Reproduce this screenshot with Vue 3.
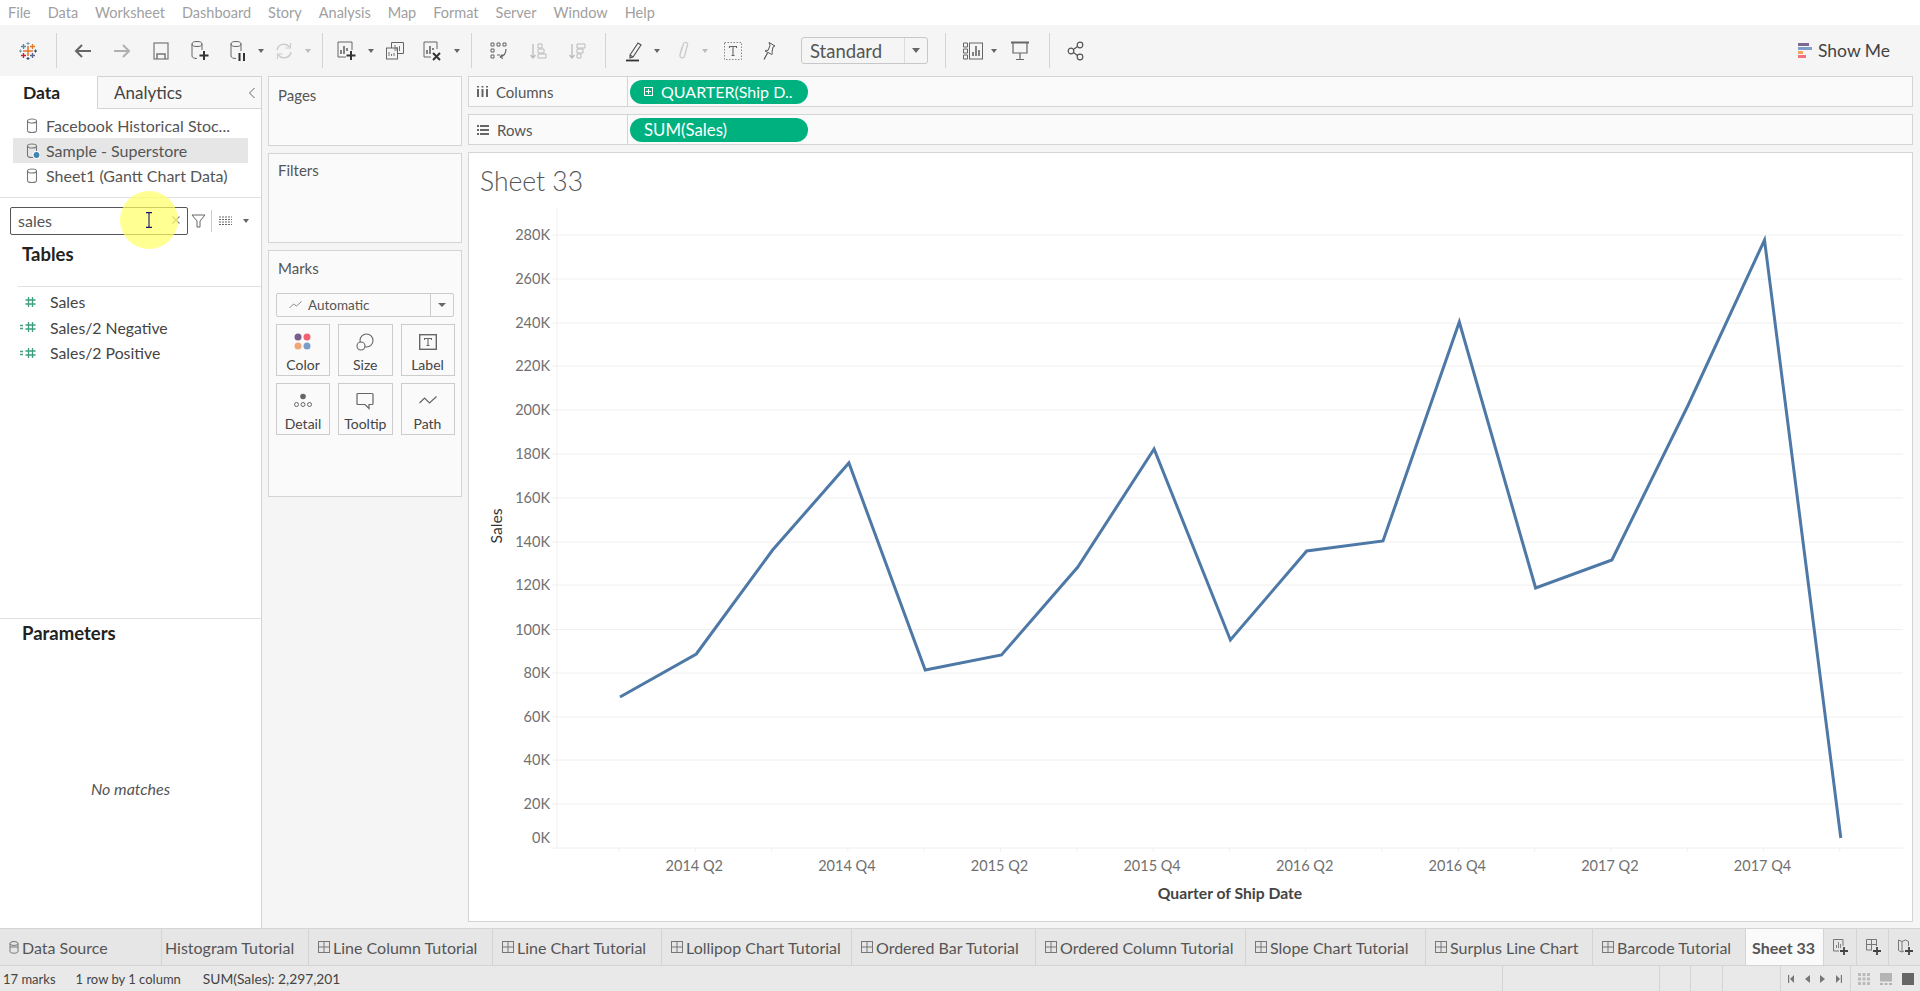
<template>
  <div class="app">
    <!-- Menu bar -->
    <nav class="menubar">
      <span v-for="m in menus" :key="m" class="menu-item">{{ m }}</span>
    </nav>

    <!-- Toolbar -->
    <div class="toolbar">
      <button class="tb logo">
        <svg width="20" height="20" viewBox="0 0 20 20" fill="none" stroke-width="1.3">
          <path d="M10 5v10M5 10h10" stroke="#e8762b" stroke-width="1.6"/>
          <path d="M5.5 3v5M3 5.500h5" stroke="#59879b"/>
          <path d="M14.500 3v5M12 5.500h5" stroke="#e8762b"/>
          <path d="M5.500 12v5M3 14.500h5" stroke="#c72035"/>
          <path d="M14.500 12v5M12 14.500h5" stroke="#5b6591"/>
          <path d="M10 1v3M8.500 2.500h3M1 10h3M2.500 8.500v3" stroke="#7099a6" stroke-width="1"/>
          <path d="M16 10h3M17.500 8.500v3M10 16v3M8.500 17.500h3" stroke="#1f447d" stroke-width="1"/>
        </svg>
      </button>
      <i class="sep first"></i>
      <div class="group g1">
        <button class="tb">
          <svg width="18" height="16" viewBox="0 0 18 16" fill="none" stroke="#666" stroke-width="2"><path d="M17 8H2M8 2 2 8l6 6"/></svg>
        </button>
        <button class="tb">
          <svg width="18" height="16" viewBox="0 0 18 16" fill="none" stroke="#b0b0b0" stroke-width="2"><path d="M1 8h15M10 2l6 6-6 6"/></svg>
        </button>
        <button class="tb">
          <svg width="16" height="18" viewBox="0 0 16 18" fill="none" stroke="#777" stroke-width="1.200"><rect x="1" y="1" width="14" height="16"/><path d="M4 17v-5h8v5" stroke-width="1.500"/></svg>
        </button>
        <button class="tb">
          <svg width="20" height="22" viewBox="0 0 20 22" fill="none" stroke="#666"><ellipse cx="7" cy="4" rx="5" ry="2.500"/><path d="M2 4v12c0 1.500 2 2.500 5 2.500M12 4v6"/><path d="M14 11v9M9.500 15.500h9" stroke="#333" stroke-width="2"/></svg>
        </button>
        <button class="tb">
          <svg width="20" height="22" viewBox="0 0 20 22" fill="none" stroke="#666"><ellipse cx="7" cy="4" rx="5" ry="2.500"/><path d="M2 4v12c0 1.500 2 2.500 5 2.500M12 4v7"/><path d="M10.500 13v8M15 13v8" stroke="#333" stroke-width="2"/></svg>
        </button>
        <i class="caret"></i>
        <button class="tb">
          <svg width="18" height="18" viewBox="0 0 18 18" fill="none" stroke="#ccc" stroke-width="1.500"><path d="M2 8a7 7 0 0 1 12.500-3M16 10a7 7 0 0 1-12.500 3"/><path d="M15.500 1v5h-5M2.500 17v-5h5" stroke-width="1.200"/></svg>
        </button>
        <i class="caret light tc"></i>
      </div>
      <i class="sep"></i>
      <div class="group g2">
        <button class="tb">
          <svg width="22" height="22" viewBox="0 0 22 22" fill="none" stroke="#666"><path d="M16 10V2H2v15h8"/><path d="M5 14v-4M8 14V6M11 11V8" stroke-width="1.600"/><path d="M15 11v9M10.500 15.500h9" stroke="#333" stroke-width="2"/></svg>
        </button>
        <i class="caret tc"></i>
        <button class="tb narrow">
          <svg width="20" height="20" viewBox="0 0 20 20" fill="none" stroke="#666"><path d="M6.500 7V1.500h12v11H13"/><rect x="1.500" y="7" width="11" height="11"/><path d="M10 10V4M12 10V6M14.500 10V5M4 15v-4M6.500 15v-2M9 15v-3" stroke-width=".9"/></svg>
        </button>
        <button class="tb narrow">
          <svg width="22" height="22" viewBox="0 0 22 22" fill="none" stroke="#666"><path d="M15 9V2H2v15h7"/><path d="M5 14v-4M8 14V6M11 10V8" stroke-width="1.600"/><path d="m11 13 7 7M18 13l-7 7" stroke="#333" stroke-width="2"/></svg>
        </button>
        <i class="caret tc"></i>
      </div>
      <i class="sep"></i>
      <div class="group g3">
        <button class="tb">
          <svg width="20" height="20" viewBox="0 0 20 20" fill="none" stroke="#666"><path d="M2 2h3v3H2zM8 2h3v3H8zM14 2h3v3h-3zM2 8h3v3H2zM2 14h3v3H2zM8 14h3"/><path d="M17 8c0 4-2 7-6 8m0 0 2.500-2.500M11 16l3 1.500" stroke-width="1.200"/></svg>
        </button>
        <button class="tb">
          <svg width="18" height="18" viewBox="0 0 18 18" fill="none" stroke="#bbb"><path d="M4 2v14M1.500 13 4 16l2.500-3" stroke-width="1.300"/><path d="M9 2h4v4H9zM9 7h6v4H9zM9 12h8v4H9z"/></svg>
        </button>
        <button class="tb">
          <svg width="18" height="18" viewBox="0 0 18 18" fill="none" stroke="#bbb"><path d="M4 2v14M1.500 13 4 16l2.500-3" stroke-width="1.300"/><path d="M9 2h8v4H9zM9 7h6v4H9zM9 12h4v4H9z"/></svg>
        </button>
      </div>
      <i class="sep"></i>
      <div class="group g4">
        <button class="tb short">
          <svg width="18" height="22" viewBox="0 0 18 22" fill="none" stroke="#555" stroke-width="1.200"><path d="m5 15 8-12 3 2-8 12-3 1zM5 15l3 2"/><path d="M1 20.500h13" stroke="#333" stroke-width="1.800"/></svg>
        </button>
        <i class="caret c-a"></i>
        <button class="tb short clip">
          <svg width="16" height="20" viewBox="0 0 16 20" fill="none" stroke="#ccc" stroke-width="1.400"><path d="m6 6-2 8c-.6 3 3.500 4 4.500 1l3-11c.6-3-3-3.500-4-1L4.500 12"/></svg>
        </button>
        <i class="caret light c-b"></i>
        <button class="tb short text-box">
          <svg width="18" height="18" viewBox="0 0 18 18" fill="none"><rect x=".5" y=".5" width="17" height="17" stroke="#888" stroke-dasharray="1.500 1.500"/><path d="M5.500 6V4.500h7V6M9 4.500v9M7.500 13.500h3" stroke="#666" stroke-width="1.100"/></svg>
        </button>
        <button class="tb short pin">
          <svg width="16" height="20" viewBox="0 0 16 20" fill="none" stroke="#555"><path d="m8 1.500 6 3.500-2 1-1 5c.5 1 .5 1.500 0 2.500L4 10c1-.8 1.500-.8 3-.5l2-5z"/><path d="M6.500 12 3 18.500" stroke-width="1.200"/></svg>
        </button>
      </div>
      <div class="standard">
        <span class="standard-text">Standard</span>
        <span class="standard-caret"><i class="caret dark"></i></span>
      </div>
      <i class="sep after-select"></i>
      <div class="group g5">
        <button class="tb short">
          <svg width="20" height="18" viewBox="0 0 20 18" fill="none" stroke="#666"><path d="M.5 1h4v4h-4zM.5 7h4v4h-4zM.5 13h4v4h-4z"/><rect x="6.500" y="1" width="13" height="16"/><path d="M10 14v-4M13 14V4M16 14V8" stroke-width="1.600"/></svg>
        </button>
        <i class="caret c-c"></i>
        <button class="tb present">
          <svg width="20" height="20" viewBox="0 0 20 20" fill="none" stroke="#666"><path d="M1 1.500h18" stroke-width="2"/><path d="M3 2v10h14V2M10 12v6M6 18.500h8" stroke-width="1.200"/></svg>
        </button>
      </div>
      <i class="sep"></i>
      <button class="tb share">
        <svg width="18" height="20" viewBox="0 0 18 20" fill="none" stroke="#555" stroke-width="1.200"><circle cx="4" cy="10" r="2.800"/><circle cx="13" cy="4" r="2.800"/><circle cx="13" cy="16" r="2.800"/><path d="m6.500 8.500 4-3M6.500 11.500l4 3"/></svg>
      </button>
      <div class="show-me">
        <svg width="14" height="15" viewBox="0 0 14 15"><rect y="0" width="11" height="3" fill="#7b6a92"/><rect y="4" width="14" height="3" fill="#7f9fcb"/><rect y="8" width="5" height="3" fill="#f2a35e"/><rect y="12" width="8" height="3" fill="#f4717d"/></svg>
        <span>Show Me</span>
      </div>
    </div>

    <!-- Main work area -->
    <div class="main">
      <aside class="data-pane">
        <div class="pane-tabs">
          <div class="pane-tab active">Data</div>
          <div class="pane-tab other">
            <span>Analytics</span>
            <svg class="collapse" width="8" height="12" viewBox="0 0 8 12" fill="none" stroke="#666"><path d="M6.500 1 1.500 6l5 5"/></svg>
          </div>
        </div>

        <ul class="sources">
          <li v-for="s in sources" :key="s.name" class="source" :class="{ current: s.current }">
            <svg width="14" height="16" viewBox="0 0 14 16" fill="none" stroke="#777" stroke-width="1.100">
              <ellipse cx="6" cy="3" rx="4.500" ry="2"/>
              <path d="M1.500 3v9.500c0 1.200 2 2 4.500 2s4.500-.8 4.500-2V3"/>
              <circle v-if="s.current" cx="10.500" cy="12" r="3.500" fill="#3f86b0" stroke="#fff"/>
            </svg>
            <span>{{ s.name }}</span>
          </li>
        </ul>

        <div class="search-row">
          <div class="search-box">
            <span>sales</span>
            <svg width="10" height="10" viewBox="0 0 10 10" fill="none" stroke="#888" stroke-width="1.100"><path d="m1.500 1.500 7 7M8.500 1.500l-7 7"/></svg>
          </div>
          <svg class="funnel" width="15" height="14" viewBox="0 0 15 14" fill="none" stroke="#666"><path d="M1 1h13L9 7v6H6V7z"/></svg>
          <i class="search-sep"></i>
          <svg class="list-view" width="13" height="10" viewBox="0 0 13 10" fill="none" stroke="#666" stroke-dasharray="2 1"><path d="M0 1h13M0 3.500h13M0 6h13M0 8.500h13"/></svg>
          <i class="caret search-caret"></i>
        </div>

        <h3 class="section-title tables">Tables</h3>
        <ul class="fields">
          <li v-for="f in fields" :key="f.name" class="field">
            <svg width="16" height="12" viewBox="0 0 16 12" fill="none" stroke="#3f9e80" stroke-width="1.300">
              <path d="M8.500 1v10M12.500 1v10M5.500 4h10M5.500 8h10"/>
              <path v-if="f.calc" d="M0 4.500h3M0 7.500h3"/>
            </svg>
            <span>{{ f.name }}</span>
          </li>
        </ul>

        <section class="params">
          <h3 class="section-title">Parameters</h3>
          <p class="no-matches">No matches</p>
        </section>

        <!-- mouse highlight of the recording -->
        <div class="mouse-ring">
          <svg width="8" height="16" viewBox="0 0 8 16" fill="none" stroke="#14146e" stroke-width="1.100"><path d="M1 .6h6M1 15.400h6M4 .6v14.800"/></svg>
        </div>
      </aside>

      <div class="cards">
        <section class="card pages">Pages</section>
        <section class="card filters">Filters</section>
        <section class="card marks">
          <div class="marks-title">Marks</div>
          <div class="marks-type">
            <svg width="13" height="8" viewBox="0 0 13 8" fill="none" stroke="#888"><path d="m.5 7 4-4 3 2 5-4.500"/></svg>
            <span>Automatic</span>
            <span class="marks-caret"><i class="caret dark"></i></span>
          </div>
          <div class="marks-grid">
            <div class="mark-btn">
              <svg width="18" height="18" viewBox="0 0 18 18">
                <circle cx="4" cy="4" r="3.500" fill="#7b5e8e"/><circle cx="13" cy="4" r="3.500" fill="#f2626e"/>
                <circle cx="4" cy="13" r="3.500" fill="#f2a678"/><circle cx="13" cy="13" r="3.500" fill="#7a9ec9"/>
              </svg>
              <span>Color</span>
            </div>
            <div class="mark-btn">
              <svg width="18" height="18" viewBox="0 0 18 18" fill="none" stroke="#666" stroke-width="1.100"><circle cx="10.500" cy="7.500" r="6.500"/><circle cx="5" cy="13" r="4" fill="#fafafa"/></svg>
              <span>Size</span>
            </div>
            <div class="mark-btn">
              <svg width="18" height="16" viewBox="0 0 18 16" fill="none" stroke="#666"><rect x=".7" y=".7" width="16.600" height="14.600" stroke-width="1.400"/><path d="M5.500 6V4.500h7V6M9 4.500v7M7.500 11.500h3" stroke-width="1.100"/></svg>
              <span>Label</span>
            </div>
            <div class="mark-btn">
              <svg width="20" height="16" viewBox="0 0 20 16" fill="none" stroke="#666"><circle cx="10" cy="3.500" r="2.800" fill="#666" stroke="none"/><circle cx="3.500" cy="11.500" r="2"/><circle cx="10" cy="11.500" r="2"/><circle cx="16.500" cy="11.500" r="2"/></svg>
              <span>Detail</span>
            </div>
            <div class="mark-btn">
              <svg width="18" height="17" viewBox="0 0 18 17" fill="none" stroke="#666" stroke-width="1.200"><path d="M2 1h14q1 0 1 1v9q0 1-1 1h-3v4l-4-4H2q-1 0-1-1V2q0-1 1-1z"/></svg>
              <span>Tooltip</span>
            </div>
            <div class="mark-btn">
              <svg width="18" height="10" viewBox="0 0 18 10" fill="none" stroke="#666" stroke-width="1.200"><path d="m.5 7 5-5 5 5 7-6.500"/></svg>
              <span>Path</span>
            </div>
          </div>
        </section>
      </div>

      <div class="viz-col">
        <div class="shelf">
          <div class="shelf-label">
            <svg width="11" height="11" viewBox="0 0 11 11" fill="#666"><rect x="0" y="3" width="2" height="8"/><rect x="4.500" y="3" width="2" height="8"/><rect x="9" y="3" width="2" height="8"/><rect x="0" y="0" width="2" height="1.500"/><rect x="4.500" y="0" width="2" height="1.500"/><rect x="9" y="0" width="2" height="1.500"/></svg>
            <span>Columns</span>
          </div>
          <div class="pill">
            <svg width="9" height="9" viewBox="0 0 9 9" fill="none" stroke="#fff"><rect x=".5" y=".5" width="8" height="8"/><path d="M4.500 2v5M2 4.500h5"/></svg>
            <span>QUARTER(Ship D..</span>
          </div>
        </div>
        <div class="shelf">
          <div class="shelf-label">
            <svg width="12" height="10" viewBox="0 0 12 10" fill="#666"><rect x="0" y="0" width="2" height="2"/><rect x="3" y="0" width="9" height="2"/><rect x="0" y="4" width="2" height="2"/><rect x="3" y="4" width="9" height="2"/><rect x="0" y="8" width="2" height="2"/><rect x="3" y="8" width="9" height="2"/></svg>
            <span>Rows</span>
          </div>
          <div class="pill sum">
            <span>SUM(Sales)</span>
          </div>
        </div>

        <section class="viz">
          <h2 class="viz-title">Sheet 33</h2>
          <svg class="chart" width="1443" height="720" viewBox="469 201 1443 720">
            <line x1="557" y1="208" x2="557" y2="848" class="grid"/>
            <g v-for="t in yTicks" :key="t.label">
              <line x1="552" :y1="t.y" x2="1903" :y2="t.y" class="grid"/>
              <text x="550" :y="t.y + 5" text-anchor="end" class="tick">{{ t.label }}</text>
            </g>
            <line x1="552" y1="848" x2="1903" y2="848" class="grid"/>
            <text x="550" y="843" text-anchor="end" class="tick">0K</text>
            <line v-for="(p, i) in points" :key="i" :x1="p[0] - 1" y1="848" :x2="p[0] - 1" y2="852" class="grid"/>
            <text v-for="t in xLabels" :key="t.label" :x="t.x" y="871" text-anchor="middle" class="tick">{{ t.label }}</text>
            <polyline :points="linePoints" fill="none" stroke="#4e79a7" stroke-width="3" stroke-linejoin="miter"/>
            <text x="1230" y="899" text-anchor="middle" class="axis-title">Quarter of Ship Date</text>
            <text x="0" y="0" text-anchor="middle" class="axis-title side" transform="translate(502 526) rotate(-90)">Sales</text>
          </svg>
        </section>
      </div>
    </div>

    <!-- Sheet tabs -->
    <div class="tabs">
      <div v-for="t in tabs" :key="t.name" class="tab" :class="{ active: t.active, plain: !t.icon }" :style="{ width: t.w + 'px' }">
        <svg v-if="t.icon === 'ds'" width="10" height="13" viewBox="0 0 10 13" fill="none" stroke="#777"><ellipse cx="5" cy="2.500" rx="4" ry="2"/><path d="M1 2.500v8c0 1 1.800 1.700 4 1.700s4-.7 4-1.700v-8M1 6h8"/></svg>
        <svg v-if="t.icon === 'grid'" width="12" height="12" viewBox="0 0 12 12" fill="none" stroke="#777"><rect x=".5" y=".5" width="11" height="11"/><path d="M6 .5v11M.5 6h11"/></svg>
        <span>{{ t.name }}</span>
      </div>
      <div class="tab add">
        <svg width="18" height="18" viewBox="0 0 18 18" fill="none" stroke="#777"><path d="M11 8V1.500H1.500V13H7"/><path d="M4.500 10V7M6.500 10V4M8.500 10V6" stroke-width=".9"/><path d="M12 9v8M8 13h8" stroke="#444" stroke-width="1.800"/></svg>
      </div>
      <div class="tab add">
        <svg width="18" height="18" viewBox="0 0 18 18" fill="none" stroke="#777"><path d="M11.500 8V1.500h-10V12H7M6.500 1.500V12M1.500 6.500h10"/><path d="M12 9v8M8 13h8" stroke="#444" stroke-width="1.800"/></svg>
      </div>
      <div class="tab add last">
        <svg width="18" height="18" viewBox="0 0 18 18" fill="none" stroke="#777"><path d="M1.500 2 5 3.500 8.500 2l3 1.500V8M1.500 2v10.500L5 14l2-1M5 3.500V14"/><path d="M12 9v8M8 13h8" stroke="#444" stroke-width="1.800"/></svg>
      </div>
    </div>

    <!-- Status bar -->
    <footer class="status">
      <span class="st-marks">17 marks</span>
      <span class="st-rows">1 row by 1 column</span>
      <span class="st-sum">SUM(Sales): 2,297,201</span>
      <i class="st-div d1"></i>
      <i class="st-div d2"></i>
      <i class="st-div d3"></i>
      <i class="st-div d4"></i>
      <i class="st-div d5"></i>
      <div class="st-nav">
        <svg width="6" height="8" viewBox="0 0 6 8" fill="#777"><rect width="1.200" height="8"/><path d="M6 0v8L2 4z"/></svg>
        <svg width="5" height="8" viewBox="0 0 5 8" fill="#777"><path d="M5 0v8L0 4z"/></svg>
        <svg width="5" height="8" viewBox="0 0 5 8" fill="#777"><path d="M0 0v8l5-4z"/></svg>
        <svg width="6" height="8" viewBox="0 0 6 8" fill="#777"><rect x="4.800" width="1.200" height="8"/><path d="M0 0v8l4-4z"/></svg>
      </div>
      <i class="st-div d6"></i>
      <div class="st-views">
        <svg width="12" height="12" viewBox="0 0 12 12" fill="#bbb"><path d="M0 0h3v3H0zM4.500 0h3v3h-3zM9 0h3v3H9zM0 4.500h3v3H0zM4.500 4.500h3v3h-3zM9 4.500h3v3H9zM0 9h3v3H0zM4.500 9h3v3h-3zM9 9h3v3H9z"/></svg>
        <svg width="12" height="12" viewBox="0 0 12 12" fill="#b4b4b4"><rect width="12" height="8.500"/><path d="M0 10h3v2H0zM4.500 10h3v2h-3zM9 10h3v2H9z"/></svg>
        <svg width="12" height="12" viewBox="0 0 12 12" fill="#666"><rect width="12" height="12"/></svg>
      </div>
    </footer>
  </div>
</template>

<script setup>
const menus = ['File', 'Data', 'Worksheet', 'Dashboard', 'Story', 'Analysis', 'Map', 'Format', 'Server', 'Window', 'Help']

const sources = [
  { name: 'Facebook Historical Stoc...' },
  { name: 'Sample - Superstore', current: true },
  { name: 'Sheet1 (Gantt Chart Data)' }
]

const fields = [
  { name: 'Sales' },
  { name: 'Sales/2 Negative', calc: true },
  { name: 'Sales/2 Positive', calc: true }
]

const tabs = [
  { name: 'Data Source', icon: 'ds', w: 162 },
  { name: 'Histogram Tutorial', w: 147 },
  { name: 'Line Column Tutorial', icon: 'grid', w: 184 },
  { name: 'Line Chart Tutorial', icon: 'grid', w: 169 },
  { name: 'Lollipop Chart Tutorial', icon: 'grid', w: 190 },
  { name: 'Ordered Bar Tutorial', icon: 'grid', w: 184 },
  { name: 'Ordered Column Tutorial', icon: 'grid', w: 210 },
  { name: 'Slope Chart Tutorial', icon: 'grid', w: 180 },
  { name: 'Surplus Line Chart', icon: 'grid', w: 167 },
  { name: 'Barcode Tutorial', icon: 'grid', w: 153 },
  { name: 'Sheet 33', active: true, w: 78 }
]

// chart coordinates are in page pixels, the svg viewBox starts at the card
const yTicks = [
  ['280K', 235], ['260K', 279], ['240K', 323], ['220K', 366], ['200K', 410], ['180K', 454], ['160K', 498],
  ['140K', 542], ['120K', 585], ['100K', 629.5], ['80K', 673], ['60K', 717], ['40K', 760], ['20K', 804]
].map(([label, y]) => ({ label, y }))

const ys = [697, 654, 550, 463, 670, 655, 567, 449, 640, 551, 541, 322, 588, 560, 405, 240, 838]
const points = ys.map((y, i) => [620 + i * 76.3, y])
const linePoints = points.map((p) => p.join(',')).join(' ')

const xLabels = ['2014 Q2', '2014 Q4', '2015 Q2', '2015 Q4', '2016 Q2', '2016 Q4', '2017 Q2', '2017 Q4']
  .map((label, i) => ({ label, x: points[i * 2 + 1][0] - 2 }))
</script>

<style>
html, body {
  margin: 0;
  background: #fff;
}
</style>

<style scoped>
.app {
  width: 1920px;
  height: 991px;
  display: flex;
  flex-direction: column;
  overflow: hidden;
  font-family: Lato, "Liberation Sans", sans-serif;
  color: #555;
  font-size: 15px;
}

button {
  border: none;
  background: none;
  padding: 0;
}

.menubar {
  height: 25px;
  flex: none;
  display: flex;
  align-items: center;
  padding-left: 8px;
  gap: 17px;
  color: #a0a0a0;
  font-size: 14.5px;
  background: #fff;
}

/* Toolbar */
.toolbar {
  height: 51px;
  flex: none;
  display: flex;
  align-items: center;
  padding-left: 8px;
  background: #f5f5f5;
}

.tb {
  width: 39px;
  height: 36px;
  flex: none;
  display: flex;
  align-items: center;
  justify-content: center;
}

.tb.narrow { width: 38px; }
.tb.short { width: 24px; }
.tb.clip { margin-left: 12.5px; }
.tb.text-box { margin-left: 13px; }
.tb.pin { margin-left: 11.5px; }
.tb.present { margin-left: 4px; }
.tb.share { width: 24px; margin-left: 14px; }

.group {
  display: flex;
  align-items: center;
  flex: none;
}

.g1 { margin-left: 6px; }
.g2 { margin-left: 4px; }
.g3 { margin-left: 7px; }
.g4 { margin-left: 16px; }
.g5 { margin-left: 15px; }

.sep {
  width: 1px;
  height: 35px;
  flex: none;
  margin-left: 9px;
  background: #d4d4d4;
}

.sep.after-select { margin-left: 17px; }

.caret {
  width: 0;
  height: 0;
  flex: none;
  border-left: 3.5px solid transparent;
  border-right: 3.5px solid transparent;
  border-top: 4px solid #666;
}

.caret.light { border-top-color: #bbb; }
.caret.dark { border-left-width: 4.5px; border-right-width: 4.5px; border-top-width: 5px; }
.tc { margin: 0 2px; }
.c-a { margin-left: 7.5px; }
.c-b { margin-left: 6px; }
.c-c { margin-left: 5.5px; }

.standard {
  width: 127px;
  height: 27px;
  margin-left: 20.5px;
  flex: none;
  box-sizing: border-box;
  display: flex;
  align-items: center;
  border: 1px solid #c8c8c8;
  border-radius: 3px;
  font-size: 18.5px;
  color: #555;
}

.standard-text {
  flex: 1;
  padding-left: 8px;
}

.standard-caret {
  width: 22px;
  height: 100%;
  display: flex;
  align-items: center;
  justify-content: center;
  border-left: 1px solid #dcdcdc;
}

.show-me {
  margin-left: auto;
  margin-right: 30px;
  display: flex;
  align-items: center;
  gap: 6px;
  font-size: 17.5px;
  color: #444;
}

/* Main */
.main {
  flex: 1;
  min-height: 0;
  display: flex;
  background: #f5f5f5;
}

/* Data pane */
.data-pane {
  position: relative;
  width: 262px;
  flex: none;
  box-sizing: border-box;
  display: flex;
  flex-direction: column;
  background: #fff;
  border-right: 1px solid #d4d4d4;
}

.pane-tabs {
  display: flex;
  height: 33px;
  flex: none;
}

.pane-tab {
  display: flex;
  align-items: center;
  font-size: 17px;
}

.pane-tab.active {
  width: 97px;
  padding-left: 23px;
  box-sizing: border-box;
  font-weight: 700;
  color: #222;
  font-size: 17.5px;
}

.pane-tab.other {
  flex: 1;
  position: relative;
  padding-left: 16px;
  background: #f8f8f8;
  border-left: 1px solid #d4d4d4;
  border-bottom: 1px solid #d4d4d4;
  border-top: 1px solid #d4d4d4;
  color: #444;
}

.collapse {
  margin-left: auto;
  margin-right: 5px;
}

.sources {
  list-style: none;
  margin: 0;
  padding: 4px 0 8px;
  height: 89px;
  box-sizing: border-box;
  flex: none;
  border-bottom: 1px solid #e0e0e0;
}

.source {
  height: 25px;
  margin: 0 13px;
  padding-left: 13px;
  display: flex;
  align-items: center;
  gap: 6px;
  white-space: nowrap;
  font-size: 16px;
}

.source.current {
  background: #e6e6e6;
}

.search-row {
  height: 28px;
  margin-top: 9px;
  flex: none;
  display: flex;
  align-items: center;
  padding-left: 10px;
}

.search-box {
  width: 178px;
  height: 28px;
  box-sizing: border-box;
  border: 1px solid #555;
  border-radius: 2px;
  display: flex;
  align-items: center;
  justify-content: space-between;
  padding: 0 6px 2px 7px;
  background: #fff;
  font-size: 16px;
}

.funnel { margin-left: 3px; }

.search-sep {
  width: 1px;
  height: 22px;
  margin-left: 5px;
  background: #ccc;
}

.list-view { margin-left: 7px; }
.search-caret { margin-left: 11px; }

.section-title {
  margin: 0;
  font-size: 18.5px;
  line-height: 22px;
  font-weight: 700;
  color: #222;
  padding-left: 22px;
}

.tables {
  height: 51px;
  padding-top: 8px;
  box-sizing: border-box;
  flex: none;
}

.fields {
  list-style: none;
  margin: 0;
  padding: 2px 0 0;
  margin-left: 18px;
  height: 332px;
  box-sizing: border-box;
  flex: none;
  border-top: 1px solid #e0e0e0;
}

.field {
  height: 25.500px;
  margin-left: -4px;
  padding-left: 6px;
  display: flex;
  align-items: center;
  gap: 14px;
  font-size: 15.8px;
  color: #444;
}

.params {
  flex: 1;
  border-top: 1px solid #e0e0e0;
  padding-top: 3px;
}

.no-matches {
  margin: 135px 0 0;
  text-align: center;
  font-style: italic;
  font-size: 16px;
}

.mouse-ring {
  position: absolute;
  left: 120px;
  top: 115px;
  width: 58px;
  height: 58px;
  border-radius: 50%;
  background: rgba(255, 255, 100, 0.7);
  display: flex;
  align-items: center;
  justify-content: center;
}

/* Pages / Filters / Marks */
.cards {
  width: 194px;
  flex: none;
  margin-left: 6px;
  display: flex;
  flex-direction: column;
  gap: 7px;
}

.card {
  box-sizing: border-box;
  background: #fafafa;
  border: 1px solid #d4d4d4;
  padding: 6px 9px;
  line-height: 24px;
}

.pages { height: 70px; }
.filters { height: 90px; padding-top: 4px; }
.marks { height: 247px; padding: 7px 7px; }

.marks-title { line-height: 20px; padding-left: 2px; }

.marks-type {
  height: 24px;
  margin-top: 15px;
  box-sizing: border-box;
  border: 1px solid #ccc;
  border-radius: 2px;
  display: flex;
  align-items: center;
  padding-left: 12px;
  gap: 6px;
  font-size: 13.500px;
  background: #fafafa;
}

.marks-caret {
  margin-left: auto;
  width: 22px;
  height: 100%;
  display: flex;
  align-items: center;
  justify-content: center;
  border-left: 1px solid #ccc;
}

.marks-caret .caret {
  border-left-width: 4px;
  border-right-width: 4px;
  border-top-width: 4px;
}

.marks-grid {
  display: grid;
  grid-template-columns: 54px 55.5px 54px;
  grid-auto-rows: 52px;
  column-gap: 7.500px;
  row-gap: 7px;
  margin-top: 7px;
}

.mark-btn {
  box-sizing: border-box;
  border: 1px solid #ccc;
  display: flex;
  flex-direction: column;
  align-items: center;
  font-size: 14px;
  line-height: 18px;
  color: #444;
  padding-top: 8px;
}

.mark-btn svg {
  height: 18px;
  flex: none;
}

.mark-btn span { margin-top: 5px; }

/* Shelves + view */
.viz-col {
  flex: 1;
  min-width: 0;
  margin: 0 7px 0 6px;
  display: flex;
  flex-direction: column;
  gap: 7px;
}

.shelf {
  height: 31px;
  flex: none;
  box-sizing: border-box;
  display: flex;
  align-items: center;
  background: #fafafa;
  border: 1px solid #d4d4d4;
}

.shelf-label {
  width: 159px;
  height: 100%;
  box-sizing: border-box;
  display: flex;
  align-items: center;
  gap: 8px;
  padding-left: 8px;
  border-right: 1px solid #d4d4d4;
}

.pill {
  width: 178px;
  height: 24px;
  margin-left: 2px;
  box-sizing: border-box;
  display: flex;
  align-items: center;
  gap: 8px;
  padding-left: 14px;
  border-radius: 12px;
  background: #00b180;
  color: #fff;
  font-size: 16px;
}

.pill.sum { font-size: 16.8px; }

.viz {
  flex: 1;
  min-height: 0;
  margin-bottom: 6px;
  box-sizing: border-box;
  background: #fff;
  border: 1px solid #d4d4d4;
  overflow: hidden;
}

.viz-title {
  margin: 0;
  height: 48px;
  box-sizing: border-box;
  padding: 12px 0 0 11px;
  font-size: 26.5px;
  font-weight: 300;
  color: #555;
  line-height: 32px;
}

.chart { display: block; }

.grid {
  stroke: #f0f0f0;
  stroke-width: 1;
}

.tick {
  font-size: 14.500px;
  fill: #707070;
}

.axis-title {
  font-size: 15.700px;
  font-weight: 700;
  fill: #444;
}

.axis-title.side {
  font-weight: 400;
  fill: #333;
}

/* Sheet tabs */
.tabs {
  height: 38px;
  flex: none;
  display: flex;
  box-sizing: border-box;
  background: #e6e6e6;
  border-top: 1px solid #d4d4d4;
  border-bottom: 1px solid #d4d4d4;
}

.tab {
  flex: none;
  box-sizing: border-box;
  display: flex;
  align-items: center;
  gap: 3px;
  padding-left: 9px;
  border-right: 1px solid #d4d4d4;
  font-size: 16px;
  color: #555;
  white-space: nowrap;
}

.tab.plain { padding-left: 3px; }

.tab.active {
  background: #fafafa;
  font-weight: 700;
  font-size: 16px;
  color: #555;
  padding-left: 6px;
}

.tab.add {
  width: 32.500px;
  padding-left: 8px;
}

.tab.last { border-right: none; width: 32px; }

/* Status bar */
.status {
  position: relative;
  height: 25px;
  flex: none;
  display: flex;
  align-items: center;
  background: #e9e9e9;
  font-size: 13px;
  color: #444;
}

.st-marks { margin-left: 3px; }
.st-rows { margin-left: 20px; }
.st-sum { margin-left: 22px; font-size: 13.800px; }

.st-div {
  position: absolute;
  top: 0;
  bottom: 0;
  width: 1px;
  background: #d4d4d4;
}

.d1 { left: 1502px; }
.d2 { left: 1659px; }
.d3 { left: 1690px; }
.d4 { left: 1722px; }
.d5 { left: 1780px; }
.d6 { left: 1850px; }

.st-nav {
  position: absolute;
  left: 1788px;
  display: flex;
  align-items: center;
  gap: 10.500px;
}

.st-views {
  position: absolute;
  left: 1858px;
  display: flex;
  align-items: center;
  gap: 10px;
}
</style>
